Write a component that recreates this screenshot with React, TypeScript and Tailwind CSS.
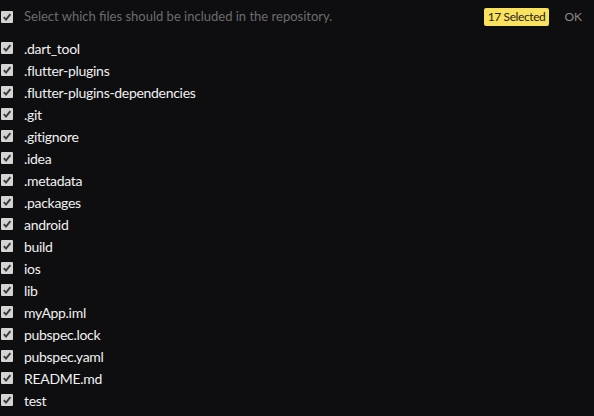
const files = [
  '.dart_tool',
  '.flutter-plugins',
  '.flutter-plugins-dependencies',
  '.git',
  '.gitignore',
  '.idea',
  '.metadata',
  '.packages',
  'android',
  'build',
  'ios',
  'lib',
  'myApp.iml',
  'pubspec.lock',
  'pubspec.yaml',
  'README.md',
  'test',
]

function Check() {
  return (
    <span className="flex h-[12px] w-[12px] shrink-0 items-center justify-center rounded-[1px] bg-[#d4d4d4]">
      <svg width="10" height="10" viewBox="0 0 10 10">
        <path d="M1.8 5.2 L4 7.6 L8.4 2.2" fill="none" stroke="#3a3a3a" strokeWidth="1.9" />
      </svg>
    </span>
  )
}

export default function App() {
  return (
    <div
      className="h-[416px] w-[594px] overflow-hidden bg-[#0e0e10] text-[#f0f0f0]"
      style={{ fontFamily: 'Lato, "Noto Sans", sans-serif' }}
    >
      {/* Header */}
      <div className="flex h-[34px] items-center pl-[1px] pr-[12px]">
        <Check />
        <span className="ml-[11px] flex-1 text-[13px] text-[#6c6c6c]">
          Select which files should be included in the repository.
        </span>
        <span className="flex h-[18px] items-center rounded-[2px] bg-[#fbe25c] px-[4px] text-[12px] tracking-[-0.4px] text-[#222]">
          17 Selected
        </span>
        <span className="ml-[15px] text-[12px] text-[#8a8a8a]">OK</span>
      </div>

      {/* Files */}
      <div className="pt-[3px]">
        {files.map((f) => (
          <div key={f} className="flex h-[22px] items-center pl-[1px]">
            <Check />
            <span className="ml-[11px] text-[14px] tracking-[-0.3px]">{f}</span>
          </div>
        ))}
      </div>
    </div>
  )
}
